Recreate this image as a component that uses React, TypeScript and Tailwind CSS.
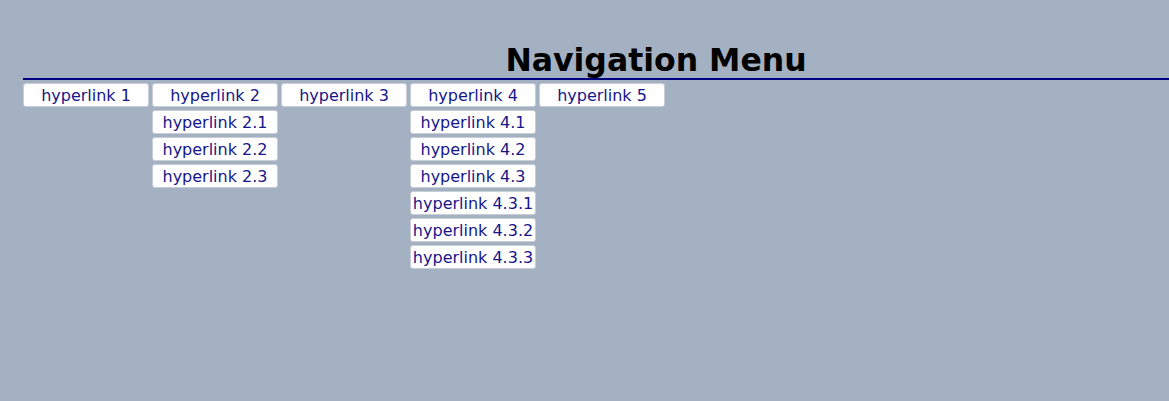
import React from "react";

type Item = { label: string; children?: Item[] };

const menu: Item[] = [
  { label: "hyperlink 1" },
  {
    label: "hyperlink 2",
    children: [{ label: "hyperlink 2.1" }, { label: "hyperlink 2.2" }, { label: "hyperlink 2.3" }],
  },
  { label: "hyperlink 3" },
  {
    label: "hyperlink 4",
    children: [
      { label: "hyperlink 4.1" },
      { label: "hyperlink 4.2" },
      { label: "hyperlink 4.3" },
      { label: "hyperlink 4.3.1" },
      { label: "hyperlink 4.3.2" },
      { label: "hyperlink 4.3.3" },
    ],
  },
  { label: "hyperlink 5" },
];

const LinkBox = ({ label }: { label: string }) => (
  <a
    href="#"
    className="flex h-[24px] w-[126px] items-center justify-center whitespace-nowrap rounded-[3px] border border-[#c9ced6] bg-white pt-[2px] text-[16px] leading-none text-[#16168a]"
  >
    {label}
  </a>
);

const App = () => {
  return (
    <div className="h-[401px] w-full overflow-hidden bg-[#a3b1c2] pl-[23px] font-['DejaVu_Sans',Verdana,sans-serif]">
      {/* Title */}
      <h1 className="pl-[120px] pt-[43px] text-center text-[31.5px] font-bold leading-[35px] text-black">
        Navigation Menu
      </h1>
      <div className="h-[2px] w-full bg-[#000080]" />

      {/* Menu */}
      <div className="mt-[3px] flex items-start gap-[3px]">
        {menu.map((item) => (
          <div key={item.label} className="flex flex-col gap-[3px]">
            <LinkBox label={item.label} />
            {item.children && (
              <div className="flex flex-col gap-[3px]">
                {item.children.map((c) => (
                  <LinkBox key={c.label} label={c.label} />
                ))}
              </div>
            )}
          </div>
        ))}
      </div>
    </div>
  );
};

export default App;
